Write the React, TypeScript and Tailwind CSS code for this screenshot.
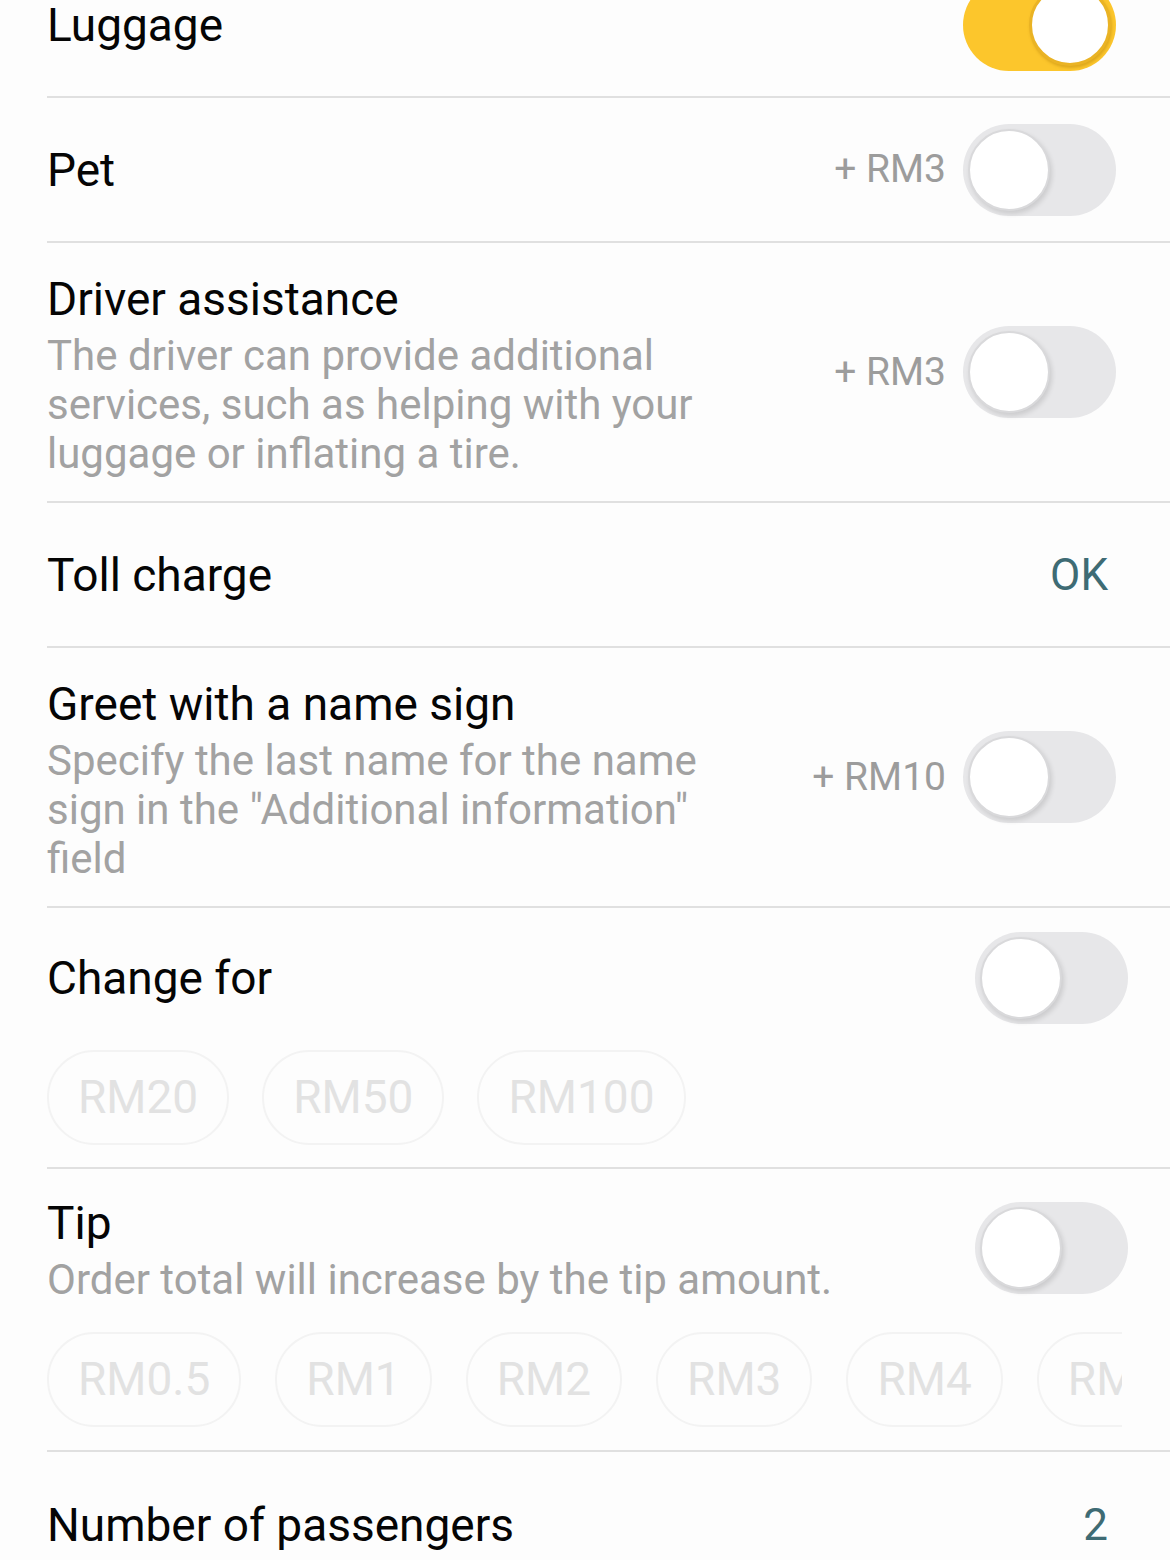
import React from "react";

function Toggle({ on = false }: { on?: boolean }) {
  if (on) {
    return (
      <div className="relative h-[92px] w-[153px] shrink-0 rounded-full bg-[#fcc62c]">
        <div className="absolute right-[5px] top-[5px] h-[82px] w-[82px] rounded-full border-[3px] border-[#eab324] bg-white shadow-[1px_2px_3px_rgba(160,110,0,0.35)]" />
      </div>
    );
  }
  return (
    <div className="relative h-[92px] w-[153px] shrink-0 rounded-full bg-[#e7e7e9]">
      <div className="absolute left-[5px] top-[5px] h-[82px] w-[82px] rounded-full border-[2px] border-[#d9d9db] bg-white shadow-[2px_3px_5px_rgba(0,0,0,0.12)]" />
    </div>
  );
}

function Price({ children }: { children: React.ReactNode }) {
  return <span className="mr-[17px] text-[39px] leading-none text-[#9c9c9c]">{children}</span>;
}

function Title({ children }: { children: React.ReactNode }) {
  return <div className="text-[46px] leading-[64px] text-[#050505]">{children}</div>;
}

function Desc({ children }: { children: React.ReactNode }) {
  return <div className="text-[42px] leading-[49px] text-[#a2a2a2]">{children}</div>;
}

function Chip({ label }: { label: string }) {
  return (
    <div className="flex h-[95px] shrink-0 items-center rounded-full border-2 border-[#f3f3f3] px-[29px] text-[46px] text-[#e2e2e2]">
      {label}
    </div>
  );
}

export default function App() {
  return (
    <div className="h-[1560px] w-[1170px] overflow-hidden bg-[#fdfdfd] font-['Roboto',sans-serif]">
      <div className="-mt-[47px] pl-[47px]">
        {/* Luggage */}
        <div className="flex h-[145px] items-center justify-between border-b-2 border-[#e0e0e0] pr-[54px]">
          <Title>Luggage</Title>
          <Toggle on />
        </div>

        {/* Pet */}
        <div className="flex h-[145px] items-center justify-between border-b-2 border-[#e0e0e0] pr-[54px]">
          <Title>Pet</Title>
          <div className="flex items-center">
            <Price>+ RM3</Price>
            <Toggle />
          </div>
        </div>

        {/* Driver assistance */}
        <div className="flex h-[260px] items-center justify-between border-b-2 border-[#e0e0e0] pr-[54px]">
          <div>
            <Title>Driver assistance</Title>
            <Desc>
              The driver can provide additional
              <br />
              services, such as helping with your
              <br />
              luggage or inflating a tire.
            </Desc>
          </div>
          <div className="flex items-center">
            <Price>+ RM3</Price>
            <Toggle />
          </div>
        </div>

        {/* Toll charge */}
        <div className="flex h-[145px] items-center justify-between border-b-2 border-[#e0e0e0] pr-[62px]">
          <Title>Toll charge</Title>
          <span className="text-[44px] leading-none text-[#3e6b74]">OK</span>
        </div>

        {/* Greet */}
        <div className="flex h-[260px] items-center justify-between border-b-2 border-[#e0e0e0] pr-[54px]">
          <div>
            <Title>Greet with a name sign</Title>
            <Desc>
              Specify the last name for the name
              <br />
              sign in the "Additional information"
              <br />
              field
            </Desc>
          </div>
          <div className="flex items-center">
            <Price>+ RM10</Price>
            <Toggle />
          </div>
        </div>

        {/* Change for */}
        <div className="h-[261px] border-b-2 border-[#e0e0e0] pt-[24px]">
          <div className="flex items-center justify-between pr-[42px]">
            <Title>Change for</Title>
            <Toggle />
          </div>
          <div className="mt-[26px] flex gap-[33px]">
            <Chip label="RM20" />
            <Chip label="RM50" />
            <Chip label="RM100" />
          </div>
        </div>

        {/* Tip */}
        <div className="h-[283px] border-b-2 border-[#e0e0e0] pt-[22px]">
          <div className="flex items-center justify-between pr-[42px]">
            <div>
              <Title>Tip</Title>
              <Desc>Order total will increase by the tip amount.</Desc>
            </div>
            <Toggle />
          </div>
          <div className="mr-[48px] mt-[28px] flex gap-[34px] overflow-hidden">
            <Chip label="RM0.5" />
            <Chip label="RM1" />
            <Chip label="RM2" />
            <Chip label="RM3" />
            <Chip label="RM4" />
            <Chip label="RM5" />
          </div>
        </div>

        {/* Number of passengers */}
        <div className="flex h-[145px] items-center justify-between pr-[62px]">
          <Title>Number of passengers</Title>
          <span className="text-[44px] leading-none text-[#3e6b74]">2</span>
        </div>
      </div>
    </div>
  );
}
